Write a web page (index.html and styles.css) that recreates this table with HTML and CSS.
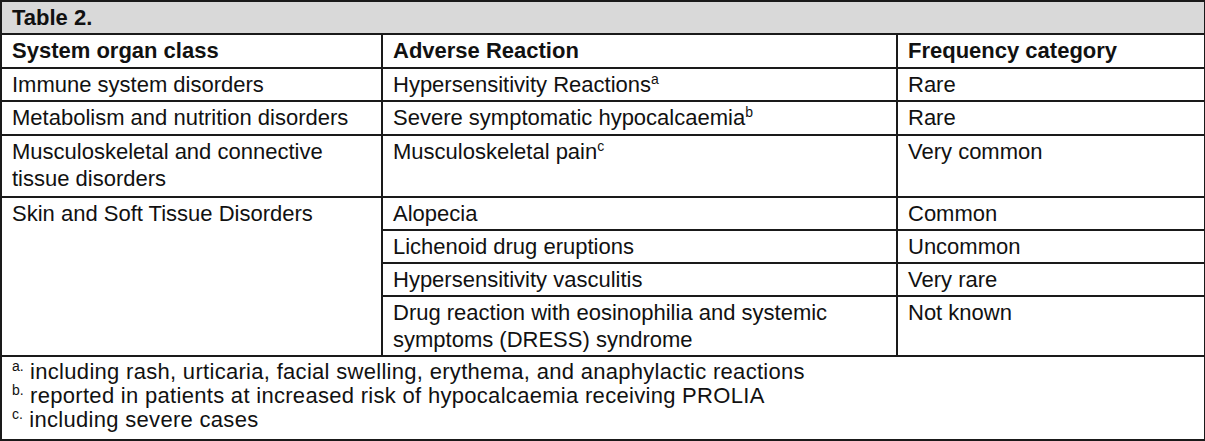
FILE: index.html
```html
<!DOCTYPE html>
<html>
<head>
<meta charset="utf-8">
<link rel="stylesheet" href="styles.css">
</head>
<body>
<table class="tbl">
  <colgroup>
    <col class="c1">
    <col class="c2">
    <col class="c3">
  </colgroup>
  <tr class="title-row"><td colspan="3">Table 2.</td></tr>
  <tr class="head-row">
    <th>System organ class</th>
    <th>Adverse Reaction</th>
    <th>Frequency category</th>
  </tr>
  <tr>
    <td>Immune system disorders</td>
    <td>Hypersensitivity Reactions<sup>a</sup></td>
    <td>Rare</td>
  </tr>
  <tr class="tall1">
    <td>Metabolism and nutrition disorders</td>
    <td>Severe symptomatic hypocalcaemia<sup>b</sup></td>
    <td>Rare</td>
  </tr>
  <tr class="tall2">
    <td>Musculoskeletal and connective tissue disorders</td>
    <td>Musculoskeletal pain<sup>c</sup></td>
    <td>Very common</td>
  </tr>
  <tr>
    <td rowspan="4">Skin and Soft Tissue Disorders</td>
    <td>Alopecia</td>
    <td>Common</td>
  </tr>
  <tr>
    <td>Lichenoid drug eruptions</td>
    <td>Uncommon</td>
  </tr>
  <tr>
    <td>Hypersensitivity vasculitis</td>
    <td>Very rare</td>
  </tr>
  <tr>
    <td>Drug reaction with eosinophilia and systemic symptoms (DRESS) syndrome</td>
    <td>Not known</td>
  </tr>
  <tr class="notes-row">
    <td colspan="3">
      <div class="note"><span class="mark">a.</span> including rash, urticaria, facial swelling, erythema, and anaphylactic reactions</div>
      <div class="note"><span class="mark">b.</span> reported in patients at increased risk of hypocalcaemia receiving PROLIA</div>
      <div class="note"><span class="mark">c.</span> including severe cases</div>
    </td>
  </tr>
</table>
</body>
</html>
```
FILE: styles.css
```css
html, body {
  margin: 0;
  padding: 0;
  background: #fff;
}
body {
  font-family: "Liberation Sans", Arial, sans-serif;
  color: #111;
}
.tbl {
  border-collapse: collapse;
  table-layout: fixed;
  width: 1204px;
  font-size: 22px;
  line-height: 27px;
}
.c1 { width: 381px; }
.c2 { width: 515px; }
.c3 { width: 308px; }
.tbl td, .tbl th {
  border: 2px solid #1a1a1a;
  padding: 2px 10px 2px 10px;
  vertical-align: top;
  text-align: left;
}
.tbl th {
  font-weight: bold;
  padding-bottom: 3px;
}
.tall1 td { padding-bottom: 3px; }
.tall2 td { padding-bottom: 4px; }
.title-row td {
  background: #d9d9d9;
  font-weight: bold;
}
sup {
  font-size: 14px;
  line-height: 0;
  vertical-align: 8px;
}
.tbl .notes-row td {
  padding: 3px 10px 7px 10px;
}
.note {
  line-height: 24px;
  font-size: 22px;
  letter-spacing: 0.3px;
  white-space: nowrap;
}
.mark {
  font-size: 14px;
  letter-spacing: 0;
  vertical-align: 8px;
  line-height: 0;
}
```
